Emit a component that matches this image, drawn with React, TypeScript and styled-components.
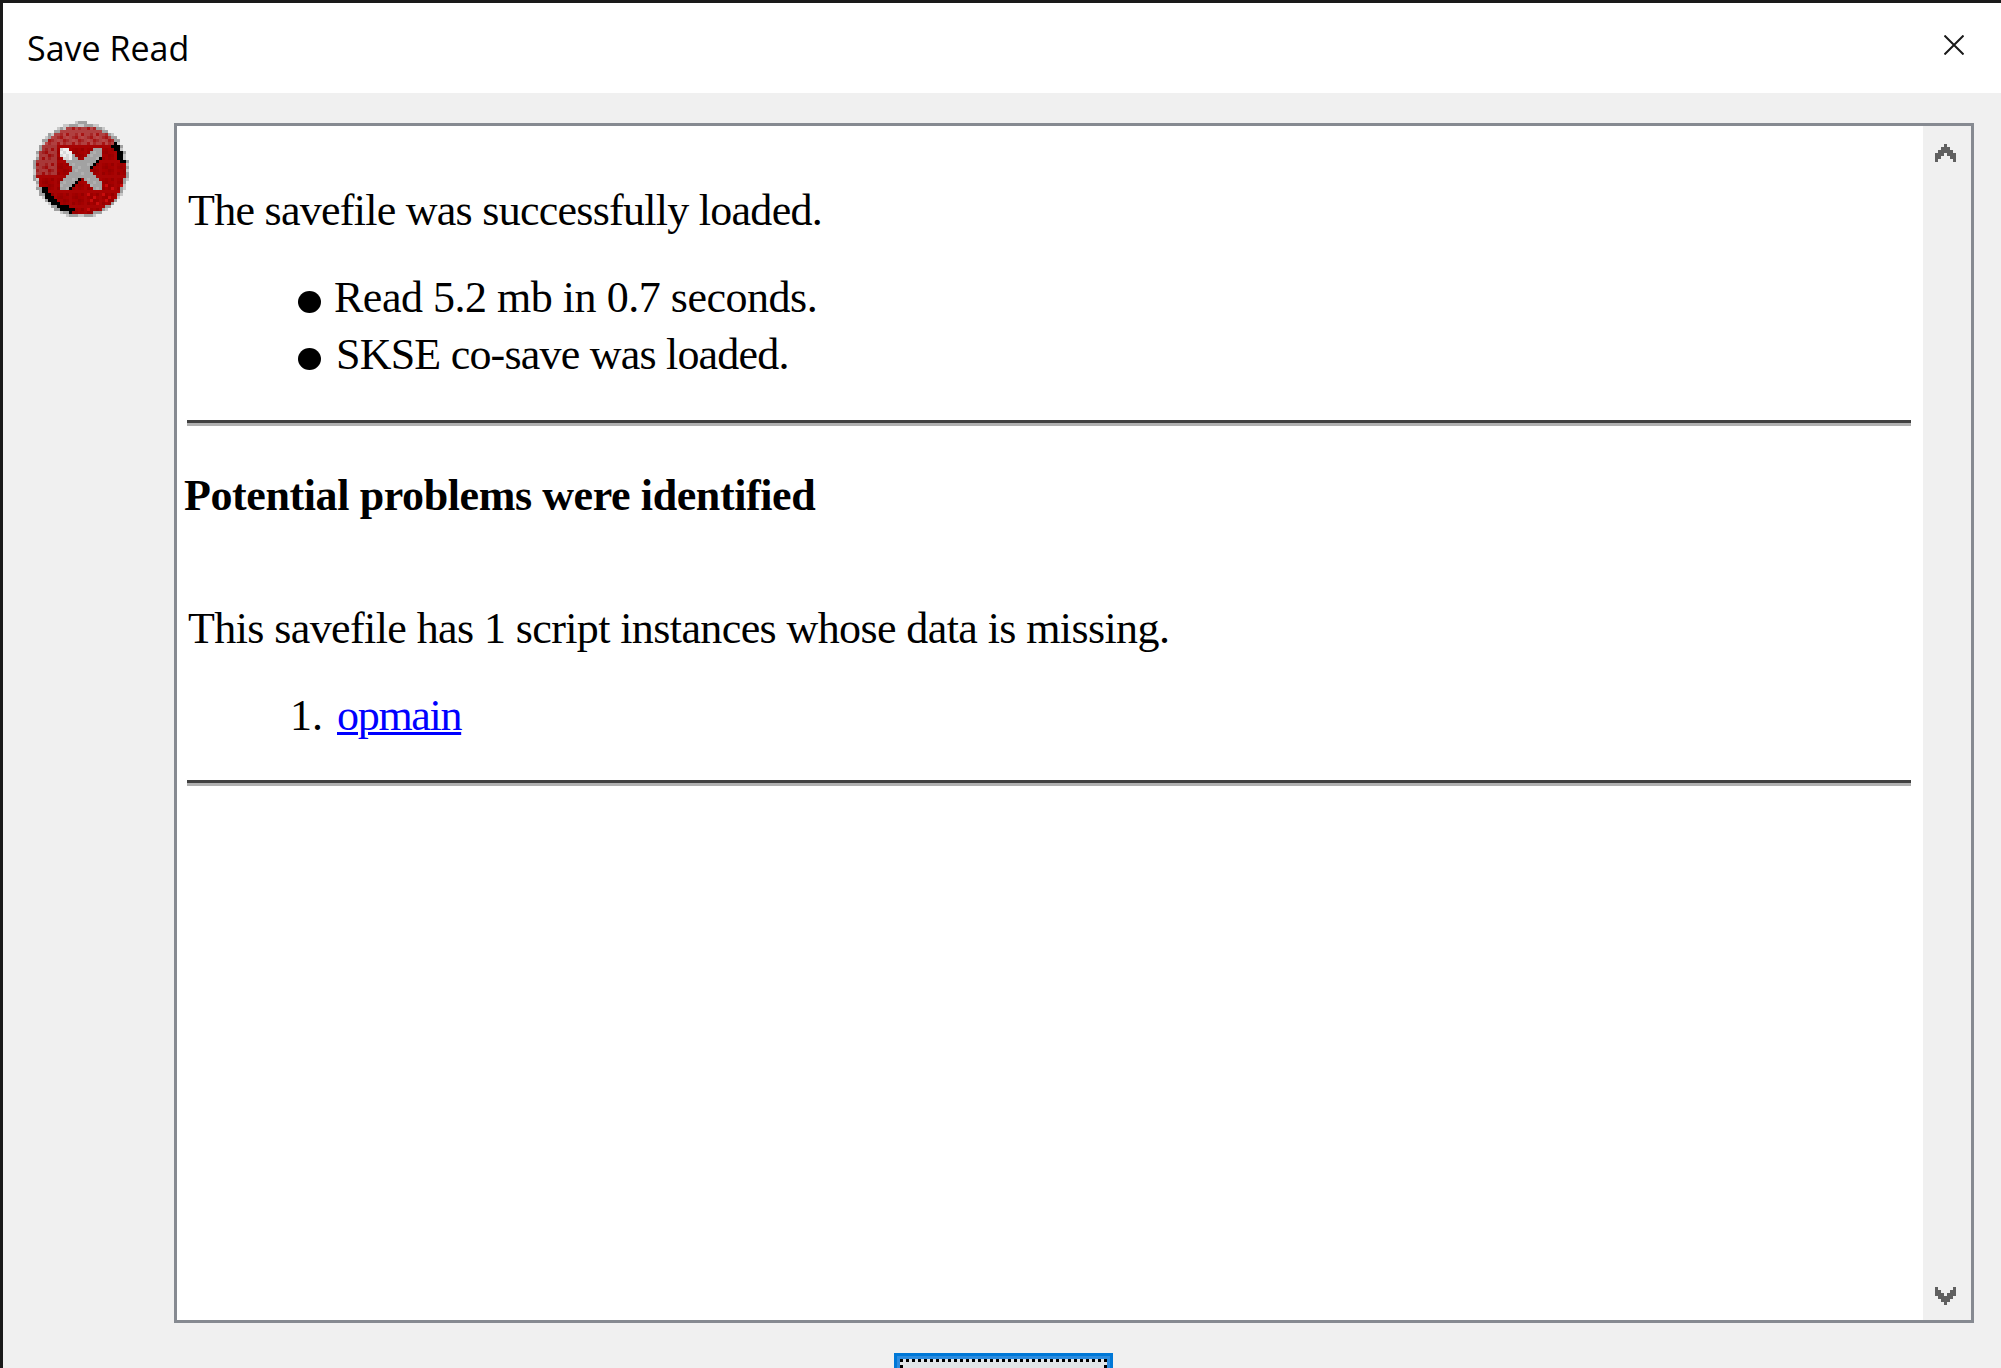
import styled, { createGlobalStyle } from 'styled-components';

const GlobalStyle = createGlobalStyle`
	html, body {
		margin: 0;
		padding: 0;
		background: #f0f0f0;
	}
`;

const Window = styled.div`
	width: 2001px;
	height: 1368px;
	box-sizing: border-box;
	border-top: 3px solid #1a1a1a;
	border-left: 3px solid #1a1a1a;
	background: #f0f0f0;
	overflow: hidden;
	display: flex;
	flex-direction: column;
`;

const TitleBar = styled.div`
	height: 90px;
	flex: none;
	box-sizing: border-box;
	background: #fff;
	display: flex;
	align-items: center;
	justify-content: space-between;
	padding: 0 37px 0 24px;
`;

const Title = styled.span`
	font-family: "Open Sans", "Noto Sans", sans-serif;
	font-size: 34px;
	color: #000;
`;

const CloseSvg = styled.svg`
	margin-bottom: 6px;
`;

const Body = styled.div`
	flex: none;
	height: 1230px;
	display: flex;
	padding: 30px 27px 0 30px;
	box-sizing: border-box;
`;

const IconSlot = styled.div`
	width: 141px;
	flex: none;
`;

const ErrorSvg = styled.svg`
	display: block;
	margin: -2px 0 0 0;
`;

const Panel = styled.div`
	flex: 1;
	height: 1200px;
	box-sizing: border-box;
	border: 3px solid #868a91;
	background: #fff;
	display: flex;
`;

const Content = styled.div`
	flex: 1;
	padding: 0 12px 0 10px;
	font-family: "Liberation Serif", serif;
	font-size: 44px;
	color: #000;
`;

const Paragraph = styled.p<{ $top: number; $tracking: number }>`
	margin: ${p => p.$top}px 0 0 1px;
	line-height: 44px;
	letter-spacing: ${p => p.$tracking}px;
`;

const BulletList = styled.ul`
	list-style: none;
	margin: 36px 0 0;
	padding: 0 0 0 111px;
`;

const Bullet = styled.li<{ $gap: number; $tracking: number }>`
	display: flex;
	align-items: center;
	gap: ${p => p.$gap}px;
	height: 57px;
	line-height: 44px;
	letter-spacing: ${p => p.$tracking}px;

	&::before {
		content: '';
		width: 23px;
		height: 22px;
		border-radius: 50%;
		background: #000;
		margin-top: 8px;
	}
`;

const Rule = styled.hr<{ $top: number }>`
	margin: ${p => p.$top}px 0 0;
	height: 3px;
	border: none;
	background: #404040;
	border-bottom: 3px solid #b0b0b0;
`;

const Heading = styled.h2`
	margin: 48px 0 0 -3px;
	font-size: 44px;
	line-height: 44px;
	font-weight: bold;
	letter-spacing: -0.4px;
`;

const NumberedRow = styled.div`
	display: flex;
	margin: 43px 0 0 103px;
	line-height: 44px;
	gap: 14px;
`;

const MissingLink = styled.a`
	color: #0000ff;
	text-decoration: underline;
	text-decoration-thickness: 3px;
	letter-spacing: -1.3px;
`;

const ScrollBar = styled.div`
	width: 48px;
	flex: none;
	box-sizing: border-box;
	background: #f0f0f0;
	display: flex;
	flex-direction: column;
	justify-content: space-between;
	align-items: center;
	padding: 18px 3px 15px 0;
`;

const Footer = styled.div`
	display: flex;
	justify-content: center;
	padding: 30px 0 0 3px;
`;

const OkButton = styled.button`
	width: 219px;
	height: 60px;
	flex: none;
	padding: 0;
	box-sizing: border-box;
	border: 3px solid #0078d7;
	outline: 3px solid #2b8ce0;
	outline-offset: -6px;
	background: #e1e5e8;
	position: relative;

	&::after {
		content: '';
		position: absolute;
		inset: 3px;
		background-image:
			linear-gradient(90deg, #000 50%, transparent 50%),
			linear-gradient(#000 50%, transparent 50%),
			linear-gradient(#000 50%, transparent 50%);
		background-size: 6px 3px, 3px 6px, 3px 6px;
		background-position: 0 0, 0 6px, 100% 6px;
		background-repeat: repeat-x, repeat-y, repeat-y;
	}
`;

const CloseIcon = () => (
	<CloseSvg width="20" height="20" viewBox="0 0 20 20" fill="none" stroke="#1a1a1a" strokeWidth="2">
		<path d="M0.5 0.5 L19.5 19.5 M19.5 0.5 L0.5 19.5" />
	</CloseSvg>
);

const ScrollArrow = ({ down }: { down?: boolean }) => (
	<svg width="21" height="18" viewBox="0 0 7 6" fill="#606060" shapeRendering="crispEdges" style={down ? { transform: 'scaleY(-1)' } : undefined}>
		<path d="M3 0h1v1h-1z M2 1h3v1h-3z M1 2h5v1h-5z M0 3h3v1h-3z M4 3h3v1h-3z M0 4h2v1h-2z M5 4h2v1h-2z M0 5h1v1h-1z M6 5h1v1h-1z" />
	</svg>
);

// the icon is a bitmap of 3px cells in the screenshot, so it gets drawn cell by cell
const segmentDistance = (px: number, py: number, ax: number, ay: number, bx: number, by: number) => {
	const dx = bx - ax;
	const dy = by - ay;
	const t = Math.max(0, Math.min(1, ((px - ax) * dx + (py - ay) * dy) / (dx * dx + dy * dy)));
	return Math.hypot(px - ax - t * dx, py - ay - t * dy);
};

const iconCellColor = (c: number, r: number): string | null => {
	const d = Math.hypot(c - 15.5, r - 15.8);
	if (d > 15.9) return null;
	const hash = (c * 7 + r * 13 + c * r) % 5;
	if (d > 14.8) return hash % 2 ? '#c8c8c8' : '#a0a0a0';
	const angle = (Math.atan2(r - 15.8, c - 15.5) * 180) / Math.PI;
	if (d > 13 && ((angle > -38 && angle < -8) || (angle > 100 && angle < 155))) return '#000000';
	const armA = segmentDistance(c, r, 10, 10, 21, 21);
	const armB = segmentDistance(c, r, 21, 10, 10, 21);
	if (armA < 1.6 && c < 13 && r < 13) return hash > 1 ? '#f0f0f0' : '#d8d8d8';
	if (armA < 1.6 || armB < 1.6) return hash === 0 ? '#b0b0b0' : '#a2a2a2';
	if (segmentDistance(c - 1.5, r - 1.5, 21, 10, 10, 21) < 0.7) return '#000000';
	if (r < 8 && d > 7) return ['#b04040', '#a82828', '#b84848', '#a81414', '#b04040'][hash];
	if (c < 8 && r < 18) return ['#a83838', '#a02020', '#ac3c3c', '#a00c0c', '#a83838'][hash];
	if (c > 16 && r > 20 && hash === 0) return '#c80c0c';
	return ['#a30000', '#9c0000', '#a60000', '#960000', '#a80404'][hash];
};

const iconCells = Array.from({ length: 32 * 32 }, (_, i) => ({
	c: i % 32,
	r: Math.floor(i / 32),
	color: iconCellColor(i % 32, Math.floor(i / 32)),
})).filter(cell => cell.color);

const ErrorIcon = () => (
	<ErrorSvg width="96" height="96" viewBox="0 0 32 32" shapeRendering="crispEdges">
		{iconCells.map(cell => (
			<rect key={`${cell.c}-${cell.r}`} x={cell.c} y={cell.r} width="1" height="1" fill={cell.color as string} />
		))}
	</ErrorSvg>
);

const App = () => {
	return (
		<>
			<GlobalStyle />
			<Window>
				<TitleBar>
					<Title>Save Read</Title>
					<CloseIcon />
				</TitleBar>
				<Body>
					<IconSlot>
						<ErrorIcon />
					</IconSlot>
					<Panel>
						<Content>
							<Paragraph $top={63} $tracking={-0.73}>The savefile was successfully loaded.</Paragraph>
							<BulletList>
								<Bullet $gap={13} $tracking={-0.48}>Read 5.2 mb in 0.7 seconds.</Bullet>
								<Bullet $gap={15} $tracking={-0.79}>SKSE co-save was loaded.</Bullet>
							</BulletList>
							<Rule $top={37} />
							<Heading>Potential problems were identified</Heading>
							<Paragraph $top={89} $tracking={-0.6}>This savefile has 1 script instances whose data is missing.</Paragraph>
							<NumberedRow>
								<span>1.</span>
								<MissingLink href="#opmain">opmain</MissingLink>
							</NumberedRow>
							<Rule $top={42} />
						</Content>
						<ScrollBar>
							<ScrollArrow />
							<ScrollArrow down />
						</ScrollBar>
					</Panel>
				</Body>
				<Footer>
					<OkButton />
				</Footer>
			</Window>
		</>
	);
};

export default App;
